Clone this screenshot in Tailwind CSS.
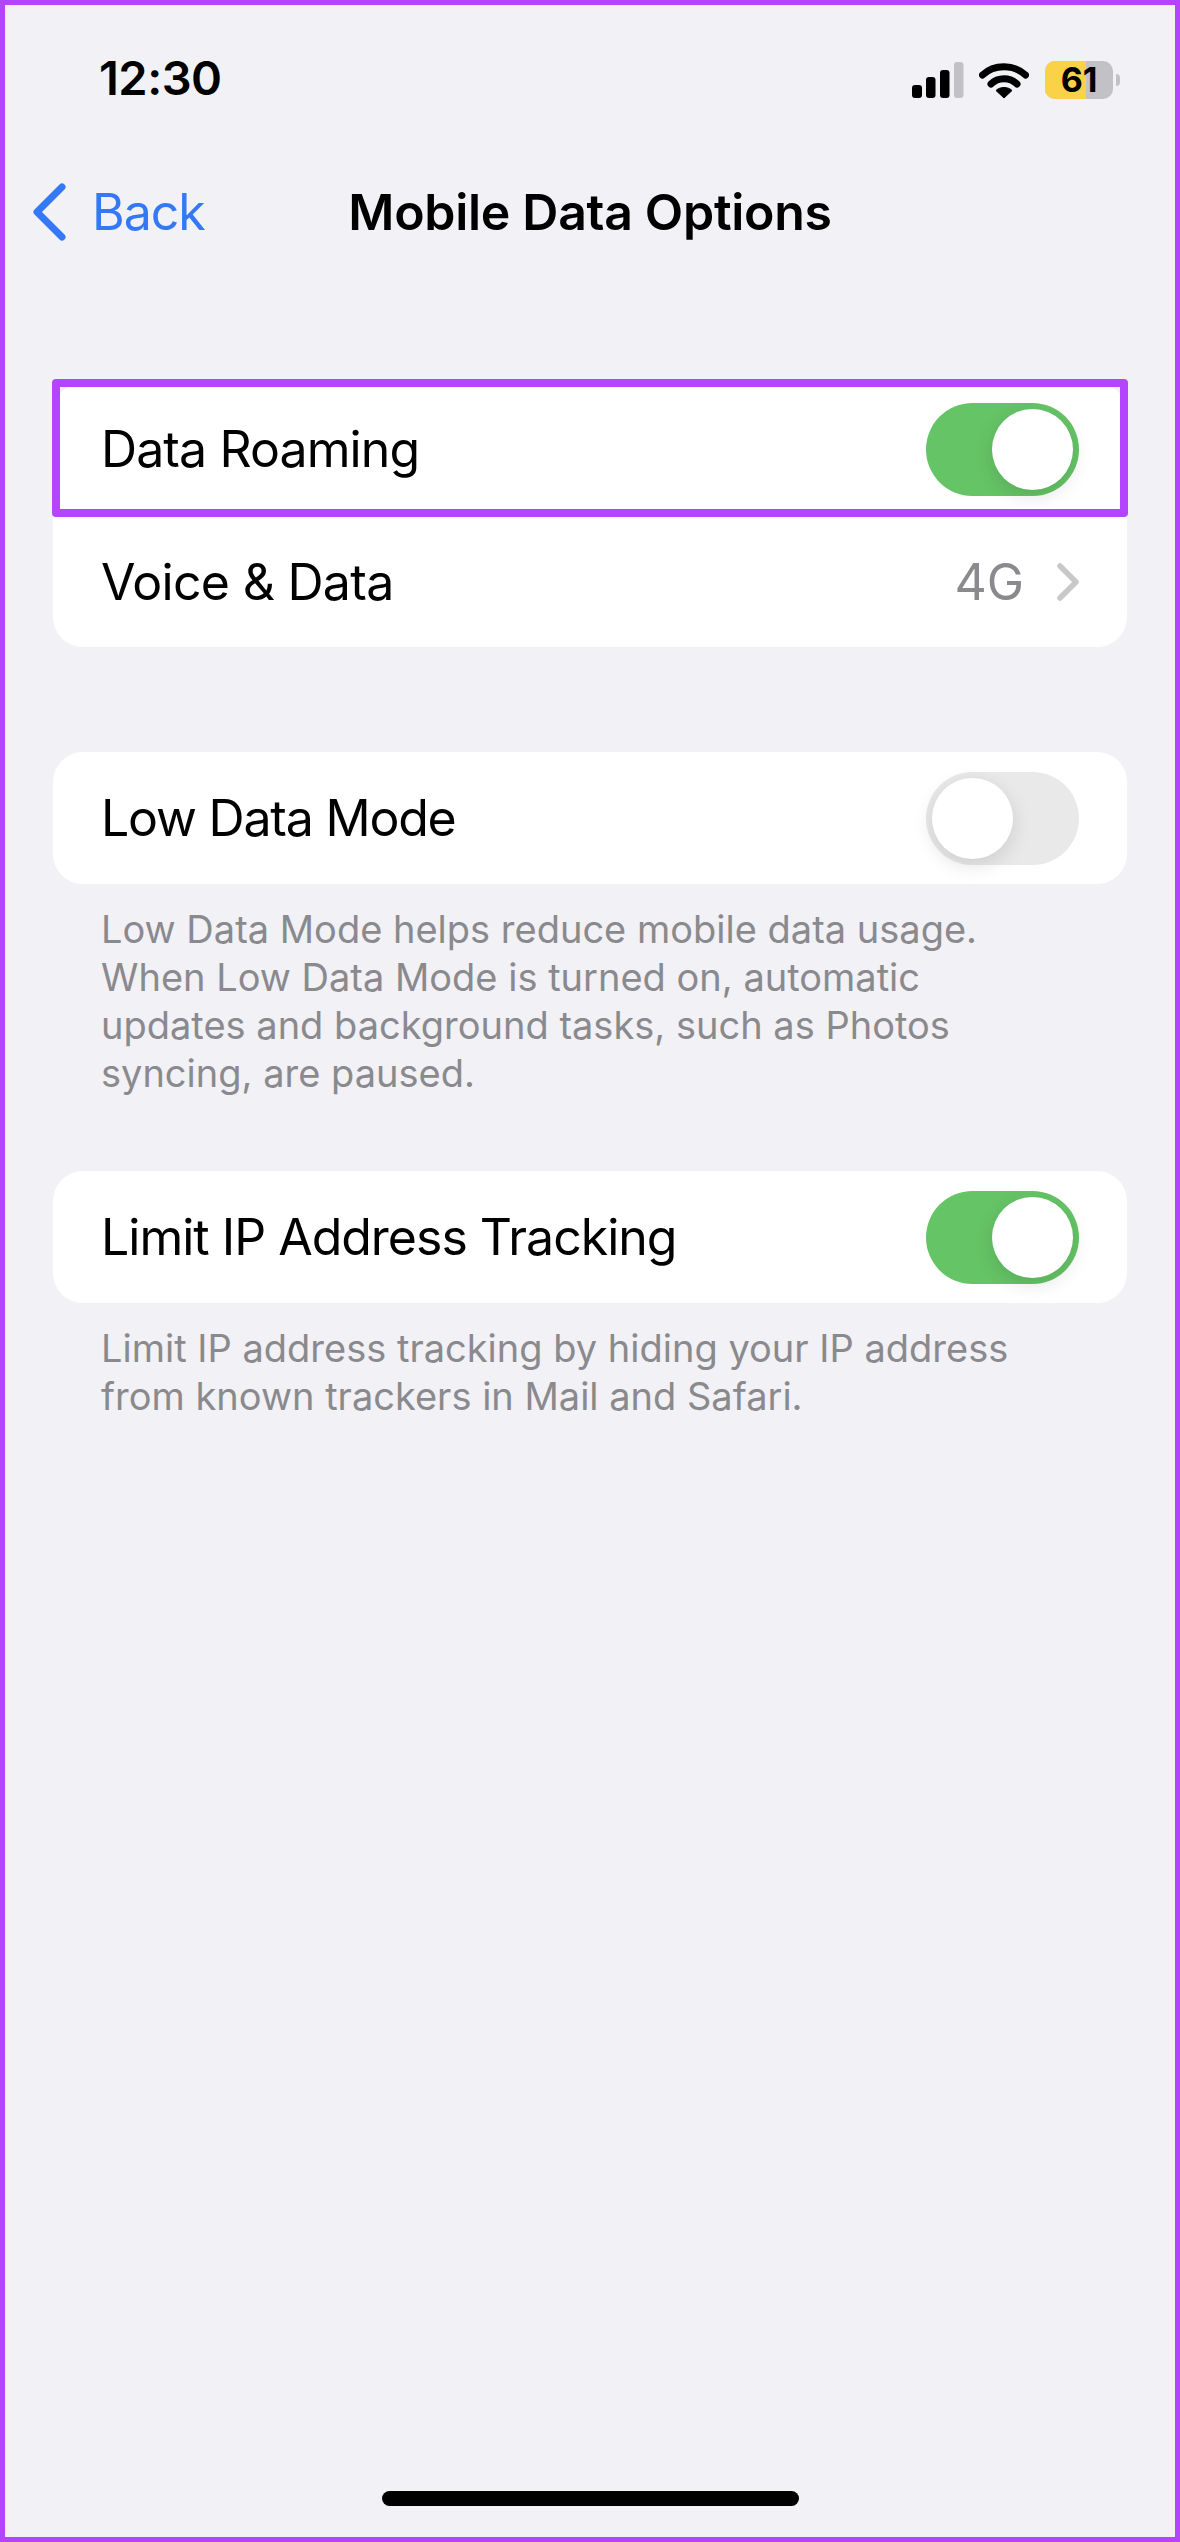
<!DOCTYPE html>
<html lang="en">
  <head>
    <meta charset="UTF-8" />
    <meta name="viewport" content="width=device-width, initial-scale=1.0" />
    <title>Mobile Data Options</title>
    <script src="https://cdn.jsdelivr.net/npm/@tailwindcss/browser@4"></script>
  </head>
  <body class="bg-[#f1f1f6] font-['Inter',sans-serif] text-black">
    <div class="relative w-[1180px] h-[2542px] border-[5px] border-[#b344ff] flex flex-col">
      <!-- Status bar -->
      <div class="h-[148px] pt-[46px] pl-[94px] pr-[55px] flex justify-between items-start shrink-0">
        <span class="text-[47px] leading-[54px] font-semibold tracking-[-0.5px]">12:30</span>
        <div class="flex items-center gap-[15px] mt-[10px]">
          <svg width="52" height="36" viewBox="0 0 52 36">
            <rect x="0" y="23" width="10" height="13" rx="3" fill="#000" />
            <rect x="14" y="15" width="9.5" height="21" rx="3" fill="#000" />
            <rect x="28" y="8" width="9.5" height="28" rx="3" fill="#000" />
            <rect x="42" y="0" width="9.5" height="36" rx="3" fill="#c2c1c6" />
          </svg>
          <svg width="50" height="38" viewBox="0 0 50 38">
            <path d="M3.5 14 C15 3 35 3 46.5 14" fill="none" stroke="#000" stroke-width="7" stroke-linecap="round" />
            <path d="M12 23 C19 16 31 16 38 23" fill="none" stroke="#000" stroke-width="7" stroke-linecap="round" />
            <path d="M17 29.5 C21 25.5 29 25.5 33 29.5 L25 37 Z" fill="#000" stroke="#000" stroke-width="1" stroke-linejoin="round" />
          </svg>
          <div class="flex items-center gap-[3px] ml-[1px]">
            <div class="relative w-[68px] h-[38px] rounded-[10px] bg-[#c2c1c6] flex items-center justify-center">
              <div class="absolute left-0 top-0 bottom-0 w-[41px] rounded-l-[10px] bg-[#f9d248]"></div>
              <span class="relative text-[34px] leading-none font-bold">61</span>
            </div>
            <div class="w-[4px] h-[12px] rounded-r-full bg-[#c2c1c6]"></div>
          </div>
        </div>
      </div>

      <!-- Nav bar -->
      <div class="relative h-[118px] shrink-0 flex items-center pl-[26px]">
        <svg width="36" height="60" viewBox="0 0 36 60">
          <path d="M31 5 L6 30 L31 55" fill="none" stroke="#3478f6" stroke-width="7" stroke-linecap="round" stroke-linejoin="round" />
        </svg>
        <span class="ml-[25px] text-[50px] leading-none text-[#3478f6] tracking-[-1px]">Back</span>
        <h1 class="absolute left-0 right-0 text-center text-[50px] leading-none font-semibold tracking-[-0.3px]">Mobile Data Options</h1>
      </div>

      <!-- Settings groups -->
      <div class="px-[48px] pt-[112px] flex flex-col">
        <div class="relative bg-white rounded-[30px]">
          <div class="h-[132px] pl-[48px] pr-[48px] flex items-center justify-between">
            <span class="text-[50px] leading-none tracking-[-0.9px]">Data Roaming</span>
            <div class="relative w-[153px] h-[93px] rounded-full bg-[#65c466]">
              <div class="absolute right-[6px] top-[6px] w-[81px] h-[81px] rounded-full bg-white shadow-[0_6px_20px_rgba(0,0,0,0.12)]"></div>
            </div>
          </div>
          <div class="h-[132px] pl-[48px] pr-[47px] pt-[2px] flex items-center justify-between">
            <span class="text-[50px] leading-none tracking-[-0.7px]">Voice &amp; Data</span>
            <div class="flex items-center gap-[32px]">
              <span class="text-[50px] leading-none text-[#8a8a8e]">4G</span>
              <svg width="24" height="38" viewBox="0 0 24 38">
                <path d="M4 3 L20 19 L4 35" fill="none" stroke="#c8c8ca" stroke-width="5.5" stroke-linecap="round" stroke-linejoin="round" />
              </svg>
            </div>
          </div>
          <!-- Highlight around the first row -->
          <div class="absolute -left-[1px] -right-[1px] -top-[4px] h-[138px] border-[8px] border-[#b344ff] rounded-[4px]"></div>
        </div>

        <div class="mt-[105px] bg-white rounded-[30px] h-[132px] pl-[48px] pr-[48px] flex items-center justify-between">
          <span class="text-[50px] leading-none tracking-[-1.2px]">Low Data Mode</span>
          <div class="relative w-[153px] h-[93px] rounded-full bg-[#e9e9ea]">
            <div class="absolute left-[6px] top-[6px] w-[81px] h-[81px] rounded-full bg-white shadow-[0_6px_20px_rgba(0,0,0,0.12)]"></div>
          </div>
        </div>
        <p class="mt-[21px] pl-[48px] text-[38px] leading-[48px] text-[#8a8a8e]">Low Data Mode helps reduce mobile data usage.<br />When Low Data Mode is turned on, automatic<br />updates and background tasks, such as Photos<br />syncing, are paused.</p>

        <div class="mt-[74px] bg-white rounded-[30px] h-[132px] pl-[48px] pr-[48px] flex items-center justify-between">
          <span class="text-[50px] leading-none tracking-[-1px]">Limit IP Address Tracking</span>
          <div class="relative w-[153px] h-[93px] rounded-full bg-[#65c466]">
            <div class="absolute right-[6px] top-[6px] w-[81px] h-[81px] rounded-full bg-white shadow-[0_6px_20px_rgba(0,0,0,0.12)]"></div>
          </div>
        </div>
        <p class="mt-[21px] pl-[48px] text-[38px] leading-[48px] text-[#8a8a8e]">Limit IP address tracking by hiding your IP address<br />from known trackers in Mail and Safari.</p>
      </div>

      <!-- Home indicator -->
      <div class="absolute bottom-[31px] left-[377px] w-[417px] h-[15px] rounded-full bg-black"></div>
    </div>
  </body>
</html>
